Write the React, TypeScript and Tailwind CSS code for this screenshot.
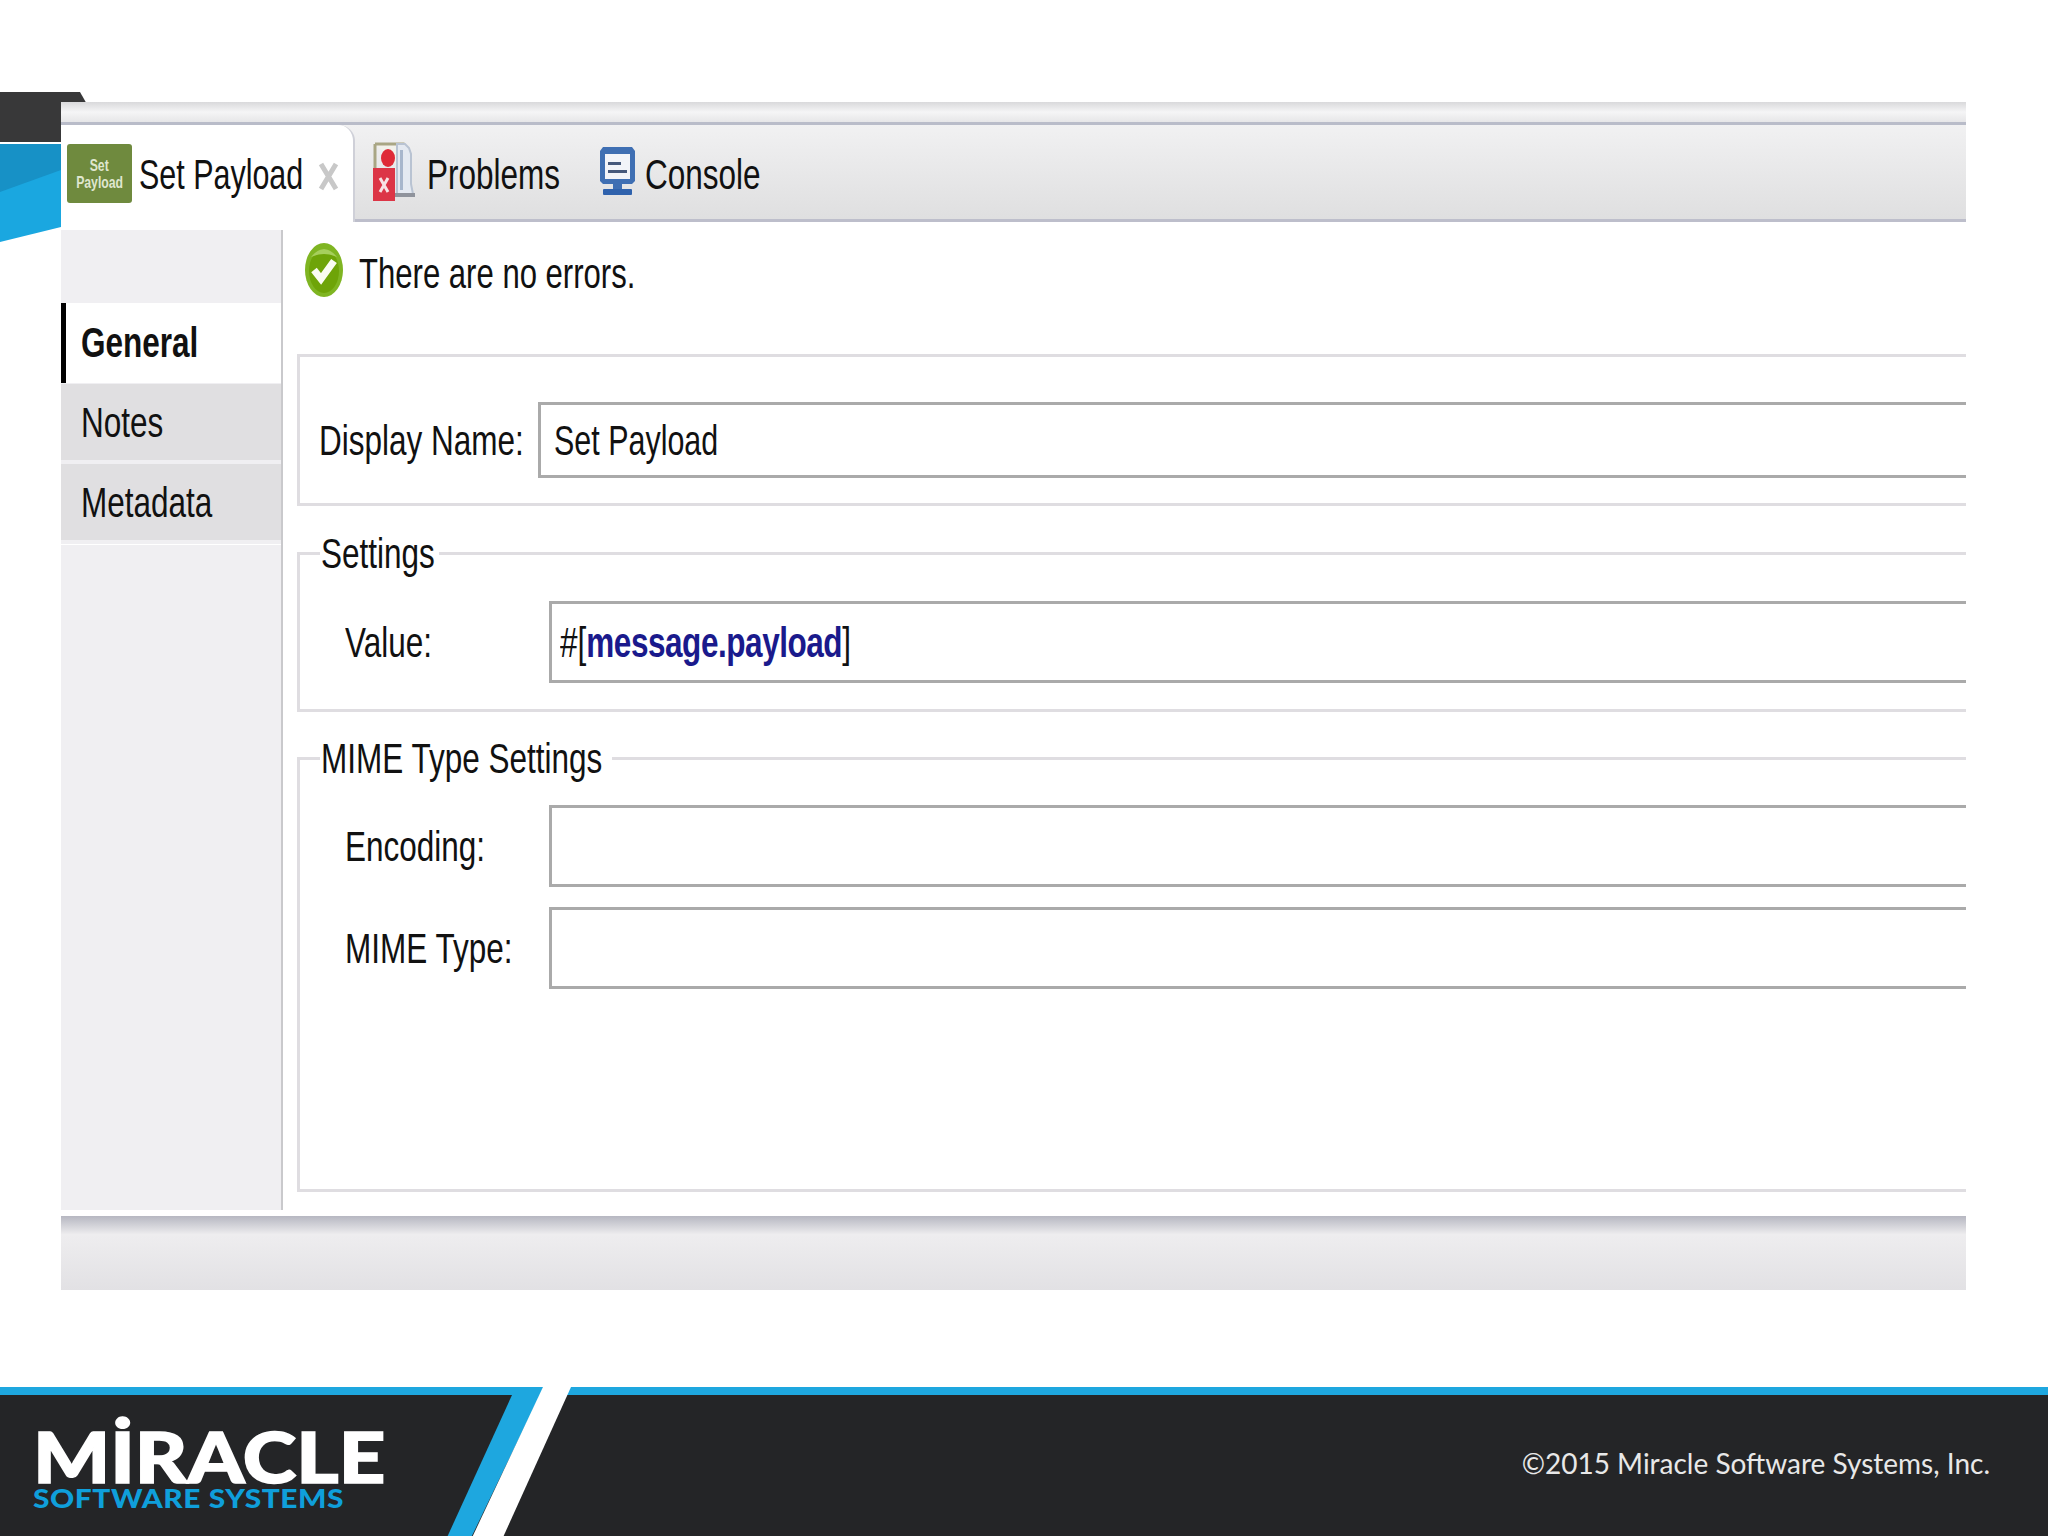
const T = ({ children, className = "" }: { children: React.ReactNode; className?: string }) => (
  <span className={"inline-block origin-left scale-x-[0.75] whitespace-nowrap text-[42px] leading-none text-[#111] [font-family:'Liberation_Sans',Arial,sans-serif] " + className}>
    {children}
  </span>
);

const SideItem = ({ label, className }: { label: string; className: string }) => (
  <div className={"flex items-center pl-[20px] pt-[2px] " + className}>
    <T>{label}</T>
  </div>
);

const Field = ({ label, children, className = "" }: { label: string; children?: React.ReactNode; className?: string }) => (
  <div className={"flex items-center pl-[45px] " + className}>
    <div className="mt-[2px] w-[204px]"><T>{label}</T></div>
    <div className="flex h-[82px] flex-1 items-center border-[3px] border-r-0 border-[#aaaaaa] bg-white pl-[8px] pt-[2px]">{children}</div>
  </div>
);

const Legend = ({ label, width }: { label: string; width: string }) => (
  <legend className={"ml-[20px] h-[40px] overflow-visible pl-[1px] " + width}><T className="align-top">{label}</T></legend>
);

const ProblemsIcon = () => (
  <svg width="44" height="60" viewBox="0 0 44 60" className="shrink-0">
    <path d="M2 2H30V28" fill="#f2f1ea" stroke="#a9a684" strokeWidth="3" />
    <path d="M2 2V30" stroke="#a9a684" strokeWidth="3" />
    <path d="M24 2h8l4 4 2 6v30l2 10H24z" fill="#e4e9f1" stroke="#b9c3d2" strokeWidth="2" />
    <rect x="27" y="8" width="3" height="40" fill="#a7b6cc" />
    <rect x="22" y="51" width="20" height="4" fill="#8f939c" />
    <ellipse cx="15" cy="16" rx="7" ry="9" fill="#df2a37" />
    <rect x="0" y="26" width="22" height="33" fill="#dc3546" />
    <path d="M7 36l8 14M15 36l-8 14" stroke="#f7e3e4" strokeWidth="3" />
  </svg>
);

const ConsoleIcon = () => (
  <svg width="36" height="50" viewBox="0 0 36 50" className="shrink-0">
    <path d="M3 0H32L35 4V34L32 37H3L0 34V4z" fill="#3f6fb3" />
    <rect x="5" y="7" width="25" height="25" fill="#f2f4f9" />
    <rect x="8" y="15" width="13" height="3" fill="#46597c" />
    <rect x="8" y="23" width="19" height="3" fill="#46597c" />
    <rect x="13" y="37" width="9" height="5" fill="#3f6fb3" />
    <rect x="3" y="42" width="29" height="6" rx="1" fill="#2f62ad" />
  </svg>
);

const CheckIcon = () => (
  <svg width="38" height="54" viewBox="0 0 38 54" className="shrink-0">
    <ellipse cx="19" cy="27" rx="19" ry="27" fill="#7fb522" />
    <ellipse cx="19" cy="28" rx="15" ry="22" fill="#6ea408" />
    <path d="M6 14Q19 -2 32 14Q19 8 6 14z" fill="#a6cf5c" />
    <path d="M9 27l7 9L29 18" fill="none" stroke="#fafcf2" strokeWidth="7" />
  </svg>
);

export default function App() {
  return (
    <div className="relative flex h-[1536px] w-[2048px] flex-col overflow-hidden bg-white">
      {/* slide decoration peeking out behind the panel */}
      <div className="absolute left-0 top-[92px] h-[50px] w-[88px] bg-[#383839] [clip-path:polygon(0_0,80px_0,88px_14px,88px_100%,0_100%)]" />
      <svg className="absolute left-0 top-[142px]" width="61" height="100" viewBox="0 0 61 100">
        <path d="M0 2H61V85L0 100z" fill="#1aa7e0" />
        <path d="M0 2H61V28L0 50z" fill="#1791c6" />
      </svg>

      <div className="h-[1387px] shrink-0 pl-[61px] pr-[82px] pt-[102px]">
        <div className="relative flex h-[1188px] flex-col bg-white">
          <div className="h-[20px] shrink-0 bg-gradient-to-b from-[#d9d9db] via-[#f5f5f6] to-[#e6e6e8]" />
          <div className="flex h-[100px] shrink-0 items-stretch border-y-[3px] border-b-[#bdbecb] border-t-[#b9bcc9] bg-gradient-to-b from-[#f1f1f2] to-[#dfdfe0]">
            <div className="-mb-[3px] flex w-[294px] items-center rounded-tr-[16px] border-r-2 border-[#cfd0d8] bg-white pl-[6px]">
              <div className="flex h-[59px] w-[65px] shrink-0 flex-col items-center justify-center rounded-[3px] bg-[#6f8a3e] text-[17px] font-bold leading-[17px] text-[#dfe6cf] [font-family:'Liberation_Sans',sans-serif]">
                <span className="scale-x-[0.72]">Set</span>
                <span className="scale-x-[0.72]">Payload</span>
              </div>
              <div className="ml-[7px] mt-[3px] w-[179px]"><T className="!scale-x-[0.725]">Set Payload</T></div>
              <svg width="21" height="29" viewBox="0 0 21 29" className="mt-[6px] shrink-0">
                <path d="M3 2L18 27M18 2L3 27" fill="none" stroke="#c8c8c8" strokeWidth="5" />
              </svg>
            </div>
            <div className="ml-[18px] flex items-center">
              <ProblemsIcon />
              <div className="ml-[10px] mt-[5px] w-[173px]"><T>Problems</T></div>
              <ConsoleIcon />
              <div className="ml-[9px] mt-[5px]"><T>Console</T></div>
            </div>
          </div>

          <div className="flex min-h-0 flex-1 pt-[8px]">
            <div className="mb-[6px] flex w-[222px] shrink-0 flex-col border-r-2 border-[#c9c9cc] bg-[#f0eff2]">
              <div className="h-[73px] shrink-0" />
              <SideItem label="General" className="h-[80px] border-l-[5px] border-black bg-white !pl-[15px] !pt-0 [&_span]:font-bold" />
              <SideItem label="Notes" className="mt-[1px] h-[76px] bg-[#e0dfe1]" />
              <SideItem label="Metadata" className="mt-[4px] h-[76px] bg-[#e0dfe1]" />
              <div className="mt-[4px] h-[1px] bg-white" />
            </div>

            <div className="flex min-w-0 flex-1 flex-col overflow-hidden pl-[14px]">
              <div className="flex h-[124px] shrink-0 items-start pl-[8px] pt-[13px]">
                <CheckIcon />
                <div className="ml-[16px] mt-[10px]"><T className="!scale-x-[0.74]">There are no errors.</T></div>
              </div>

              <div className="-mr-[4px] flex h-[152px] shrink-0 items-center border-[3px] border-[#dfdde1] pl-[19px] pt-[20px]">
                <div className="mt-[1px] w-[219px]"><T>Display Name:</T></div>
                <div className="flex h-[76px] flex-1 items-center border-[3px] border-r-0 border-[#aaaaaa] pl-[13px] pt-[2px]"><T className="!scale-x-[0.725]">Set Payload</T></div>
              </div>

              <fieldset className="-mr-[4px] mt-[27px] h-[179px] shrink-0 border-[3px] border-[#dfdde1] p-0">
                <Legend label="Settings" width="w-[119px]" />
                <Field label="Value:" className="mt-[28px]">
                  <T>#[<span className="font-bold tracking-[-0.6px] text-[#1a1a8c]">message.payload</span>]</T>
                </Field>
              </fieldset>

              <fieldset className="-mr-[4px] mt-[26px] h-[454px] shrink-0 border-[3px] border-[#dfdde1] p-0">
                <Legend label="MIME Type Settings" width="w-[292px]" />
                <Field label="Encoding:" className="mt-[27px]" />
                <Field label="MIME Type:" className="mt-[20px]" />
              </fieldset>
            </div>
          </div>

          <div className="h-[74px] shrink-0 bg-gradient-to-b from-[#b6b7c1] from-[0%] via-[#eeedef] via-[25%] to-[#e2e1e4]" />
        </div>
      </div>

      <div className="relative flex flex-1 items-center justify-between border-t-[8px] border-[#1ea7df] bg-[#242527] pl-[33px] pr-[58px]">
        <svg className="absolute left-[440px] top-[-8px]" width="140" height="157" viewBox="0 0 140 157">
          <path d="M72 8H100L28 157H4z" fill="#1ea7df" />
          <path d="M103 0H131L60 157H29z" fill="#fff" />
        </svg>
        <div className="flex flex-col pt-[12px] [font-family:Lato,sans-serif]">
          <span className="-mt-[10px] origin-left scale-x-[1.16] text-[70px] font-black leading-[66px] text-white [-webkit-text-stroke:1.5px_white]">MİRACLE</span>
          <span className="-mt-[4px] origin-left scale-x-[1.15] text-[26px] font-black leading-[26px] tracking-[0.5px] text-[#0f9fdb]">SOFTWARE SYSTEMS</span>
        </div>
        <span className="-mt-[6px] text-[28px] text-[#e8e8e8] [font-family:Lato,sans-serif]">©2015 Miracle Software Systems, Inc.</span>
      </div>
    </div>
  );
}
